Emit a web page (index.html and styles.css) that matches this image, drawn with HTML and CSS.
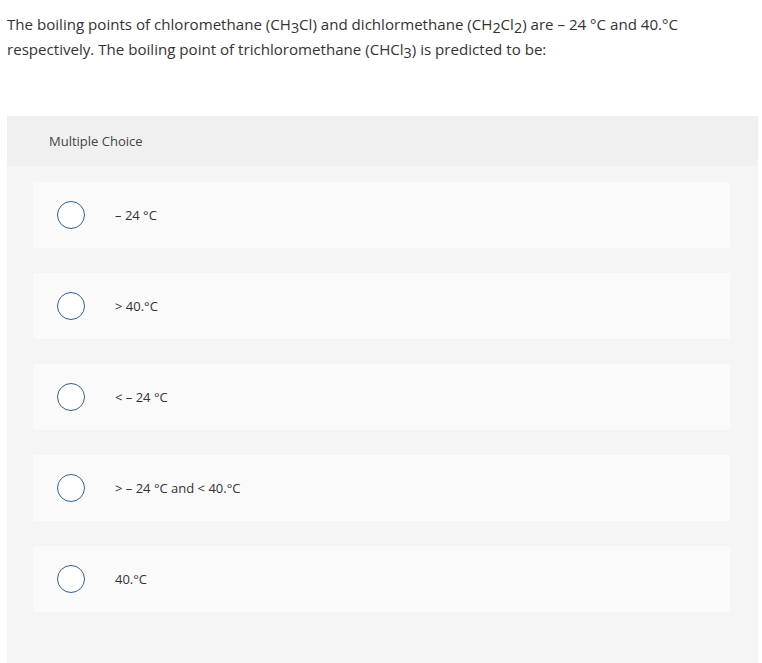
FILE: index.html
```html
<!DOCTYPE html>
<html lang="en">
<head>
<meta charset="utf-8">
<title>Multiple Choice</title>
<link rel="stylesheet" href="styles.css">
</head>
<body>
<p class="question"><span>The boiling points of chloromethane (CH</span><sub>3</sub><span>Cl) and dichlormethane (CH</span><sub>2</sub><span>Cl</span><sub>2</sub><span>) are – 24 °C and 40.°C</span> <span>respectively. The boiling point of trichloromethane (CHCl</span><sub>3</sub><span>) is predicted to be:</span></p>
<section class="mc">
  <div class="mc-head">Multiple Choice</div>
  <div class="options">
    <label class="option"><span class="radio"></span><span class="opt-text">– 24 °C</span></label>
    <label class="option"><span class="radio"></span><span class="opt-text">&gt; 40.°C</span></label>
    <label class="option"><span class="radio"></span><span class="opt-text">&lt; – 24 °C</span></label>
    <label class="option"><span class="radio"></span><span class="opt-text">&gt; – 24 °C and &lt; 40.°C</span></label>
    <label class="option"><span class="radio"></span><span class="opt-text">40.°C</span></label>
  </div>
</section>
</body>
</html>
```
FILE: styles.css
```css
html, body {
  margin: 0;
  padding: 0;
  background: #ffffff;
}
body {
  padding: 0 4px 0 7px;
  font-family: "Open Sans", "Liberation Sans", sans-serif;
  color: #333333;
}
.question {
  margin: 0;
  padding-top: 12px;
  font-size: 15.1px;
  line-height: 25px;
  color: #333333;
}
.question sub {
  font-size: 0.95em;
  vertical-align: baseline;
  position: relative;
  top: 3px;
}
.mc {
  margin-top: 54px;
  background: #f5f5f5;
  padding-bottom: 60px;
}
.mc-head {
  height: 50px;
  background: #f0f0f0;
  display: flex;
  align-items: center;
  padding-left: 42px;
  font-size: 13px;
  color: #444444;
}
.options {
  display: flex;
  flex-direction: column;
  gap: 25px;
  padding: 16px 28px 0 26px;
}
.option {
  height: 66px;
  background: #fafafa;
  border-radius: 3px;
  display: flex;
  align-items: center;
  padding-left: 24px;
}
.radio {
  width: 26px;
  height: 26px;
  border: 1.5px solid #2f6196;
  border-radius: 50%;
  background: #ffffff;
  flex: none;
}
.opt-text {
  margin-left: 30px;
  font-size: 13px;
  color: #333333;
}
```
